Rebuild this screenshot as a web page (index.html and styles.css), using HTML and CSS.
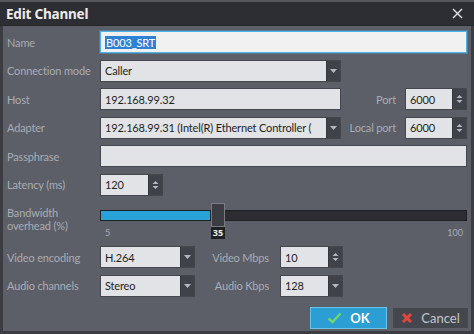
FILE: index.html
```html
<!DOCTYPE html>
<html lang="en">
<head>
    <meta charset="UTF-8">
    <title>Edit Channel</title>
    <link rel="stylesheet" href="styles.css">
</head>
<body>
    <div class="window">
        <div class="title-bar">
            <h1 class="title">Edit Channel</h1>
            <span class="close">
                <svg width="11" height="11" viewBox="0 0 11 11"><path d="M1 1 L10 10 M10 1 L1 10" stroke="#e4e4e4" stroke-width="1.4" fill="none"/></svg>
            </span>
        </div>
        <div class="dialog">
            <div class="row">
                <span class="label">Name</span>
                <div class="field field-active grow"><span class="selected">B003_SRT</span></div>
            </div>
            <div class="row">
                <span class="label">Connection mode</span>
                <div class="select wide">
                    <span class="value">Caller</span>
                    <span class="arrow"><svg width="7" height="4" viewBox="0 0 7 4"><path d="M0 0 H7 L3.5 4 Z" fill="#b5b7bd"/></svg></span>
                </div>
            </div>
            <div class="row">
                <span class="label">Host</span>
                <div class="field wide">192.168.99.32</div>
                <span class="side-label">Port</span>
                <div class="spin port">
                    <span class="value">6000</span>
                    <span class="arrow"><svg width="7" height="10" viewBox="0 0 7 10"><path d="M0.5 4 L3.5 1 L6.5 4 Z M0.5 6 L3.5 9 L6.5 6 Z" fill="#b5b7bd"/></svg></span>
                </div>
            </div>
            <div class="row">
                <span class="label">Adapter</span>
                <div class="select wide">
                    <span class="value">192.168.99.31 (Intel(R) Ethernet Controller (</span>
                    <span class="arrow"><svg width="7" height="4" viewBox="0 0 7 4"><path d="M0 0 H7 L3.5 4 Z" fill="#b5b7bd"/></svg></span>
                </div>
                <span class="side-label">Local port</span>
                <div class="spin port">
                    <span class="value">6000</span>
                    <span class="arrow"><svg width="7" height="10" viewBox="0 0 7 10"><path d="M0.5 4 L3.5 1 L6.5 4 Z M0.5 6 L3.5 9 L6.5 6 Z" fill="#b5b7bd"/></svg></span>
                </div>
            </div>
            <div class="row">
                <span class="label">Passphrase</span>
                <div class="field grow"></div>
            </div>
            <div class="row">
                <span class="label">Latency (ms)</span>
                <div class="spin small">
                    <span class="value">120</span>
                    <span class="arrow"><svg width="7" height="10" viewBox="0 0 7 10"><path d="M0.5 4 L3.5 1 L6.5 4 Z M0.5 6 L3.5 9 L6.5 6 Z" fill="#b5b7bd"/></svg></span>
                </div>
            </div>
            <div class="row row-slider">
                <span class="label label-multi">Bandwidth<br>overhead (%)</span>
                <div class="slider">
                    <div class="track"><div class="fill" style="width: 30%"></div></div>
                    <div class="thumb" style="left: 111px"></div>
                    <div class="thumb-value" style="left: 111px">35</div>
                    <span class="tick tick-min">5</span>
                    <span class="tick tick-max">100</span>
                </div>
            </div>
            <div class="row">
                <span class="label">Video encoding</span>
                <div class="select narrow">
                    <span class="value">H.264</span>
                    <span class="arrow"><svg width="7" height="4" viewBox="0 0 7 4"><path d="M0 0 H7 L3.5 4 Z" fill="#b5b7bd"/></svg></span>
                </div>
                <span class="side-label side-label-wide">Video Mbps</span>
                <div class="spin small">
                    <span class="value">10</span>
                    <span class="arrow"><svg width="7" height="10" viewBox="0 0 7 10"><path d="M0.5 4 L3.5 1 L6.5 4 Z M0.5 6 L3.5 9 L6.5 6 Z" fill="#b5b7bd"/></svg></span>
                </div>
            </div>
            <div class="row">
                <span class="label">Audio channels</span>
                <div class="select narrow">
                    <span class="value">Stereo</span>
                    <span class="arrow"><svg width="7" height="4" viewBox="0 0 7 4"><path d="M0 0 H7 L3.5 4 Z" fill="#b5b7bd"/></svg></span>
                </div>
                <span class="side-label side-label-wide">Audio Kbps</span>
                <div class="select small">
                    <span class="value">128</span>
                    <span class="arrow"><svg width="7" height="4" viewBox="0 0 7 4"><path d="M0 0 H7 L3.5 4 Z" fill="#b5b7bd"/></svg></span>
                </div>
            </div>
            <div class="buttons">
                <button class="button button-ok">
                    <svg width="15" height="12" viewBox="0 0 15 12"><path d="M1.5 6.5 L5.5 10 L13.5 1.5" stroke="#72d66e" stroke-width="2.4" fill="none"/></svg>
                    OK
                </button>
                <button class="button button-cancel">
                    <svg width="12" height="12" viewBox="0 0 12 12"><path d="M2 2 L10 10 M10 2 L2 10" stroke="#e2463b" stroke-width="3" fill="none"/></svg>
                    Cancel
                </button>
            </div>
        </div>
    </div>
</body>
</html>
```

FILE: styles.css
```css
* {
    margin: 0;
    padding: 0;
    box-sizing: border-box;
}
body {
    width: 474px;
    height: 334px;
    overflow: hidden;
    background-color: #5c5f68;
    font-family: Lato, "Noto Sans", sans-serif;
}
.window {
    display: flex;
    flex-direction: column;
    height: 334px;
}
.title-bar {
    display: flex;
    align-items: center;
    justify-content: space-between;
    height: 26px;
    padding: 0 11px 0 6px;
    border-top: 2px solid #55575d;
    border-bottom: 1px solid #26272b;
    background-color: #2d2e33;
}
.title {
    font-family: "Noto Sans", sans-serif;
    font-size: 13.5px;
    font-weight: bold;
    color: #ececec;
    letter-spacing: -0.2px;
}
.close {
    display: flex;
}
.dialog {
    flex: 1;
    display: flex;
    flex-direction: column;
    gap: 6.6px;
    padding: 5px 4px 0 4px;
    border: 3px solid #3b3d43;
    border-top: none;
    background-color: #5c5f68;
}
.row {
    display: flex;
    align-items: center;
    height: 22px;
}
.label {
    width: 93px;
    flex-shrink: 0;
    font-size: 11px;
    letter-spacing: -0.15px;
    color: #a9acb4;
    white-space: nowrap;
}
.field,
.select,
.spin {
    display: flex;
    align-items: center;
    height: 22px;
    font-size: 11px;
    letter-spacing: -0.15px;
    color: #1e1f22;
    background-color: #e2e3e6;
    border: 1px solid #45474e;
    white-space: nowrap;
    overflow: hidden;
}
.field {
    padding-left: 4px;
}
.field-active {
    background-color: #f1f1f2;
    border-color: #4fb3e8;
    box-shadow: 0 0 0 1px rgba(79, 179, 232, 0.35);
}
.selected {
    padding: 0 1px;
    color: #ffffff;
    background-color: #2e82d6;
}
.select .value,
.spin .value {
    flex: 1;
    padding-left: 4px;
    overflow: hidden;
}
.arrow {
    display: flex;
    align-items: center;
    justify-content: center;
    width: 14px;
    height: 100%;
    flex-shrink: 0;
    background-color: #40424a;
    border-left: 1px solid #36383e;
}
.grow {
    flex: 1;
}
.wide {
    width: 241px;
}
.narrow {
    width: 95px;
}
.small {
    width: 63px;
}
.port {
    width: 62px;
}
.side-label {
    width: 64px;
    padding-right: 9px;
    text-align: right;
    font-size: 11px;
    letter-spacing: -0.15px;
    color: #a9acb4;
    white-space: nowrap;
}
.side-label-wide {
    width: 85px;
    padding-right: 11px;
}
.row-slider {
    height: 37px;
    align-items: flex-start;
}
.label-multi {
    padding-top: 3px;
    line-height: 13px;
}
.slider {
    position: relative;
    flex: 1;
    height: 37px;
}
.track {
    margin-top: 7px;
    height: 11px;
    background-color: #2c2d32;
    border: 1px solid #1f2023;
}
.fill {
    height: 100%;
    background-color: #27a3d9;
    border-right: 1px solid #1f2023;
}
.thumb {
    position: absolute;
    top: 0;
    width: 14px;
    height: 24px;
    background-color: #3b3d43;
    border: 1px solid #797c84;
}
.thumb-value {
    position: absolute;
    top: 24px;
    width: 14px;
    height: 12px;
    font-family: "Noto Sans", sans-serif;
    font-size: 9px;
    font-weight: bold;
    line-height: 12px;
    text-align: center;
    color: #f0f0f0;
    background-color: #1f2023;
}
.tick {
    position: absolute;
    top: 24px;
    font-size: 9px;
    color: #a9acb4;
}
.tick-min {
    left: 5px;
}
.tick-max {
    right: 4px;
}
.buttons {
    display: flex;
    justify-content: flex-end;
    gap: 5px;
    margin-top: 3.6px;
    margin-right: -2px;
}
.button {
    display: flex;
    align-items: center;
    justify-content: center;
    gap: 8px;
    width: 77px;
    height: 22px;
    font-family: Lato, "Noto Sans", sans-serif;
    font-size: 13px;
}
.button-ok {
    color: #ffffff;
    font-weight: bold;
    background-color: #2b9ed3;
    border: 1px solid #6ac3ea;
}
.button-cancel {
    color: #c4c6cb;
    background-color: #45474e;
    border: 1px solid #5d6068;
}
```
